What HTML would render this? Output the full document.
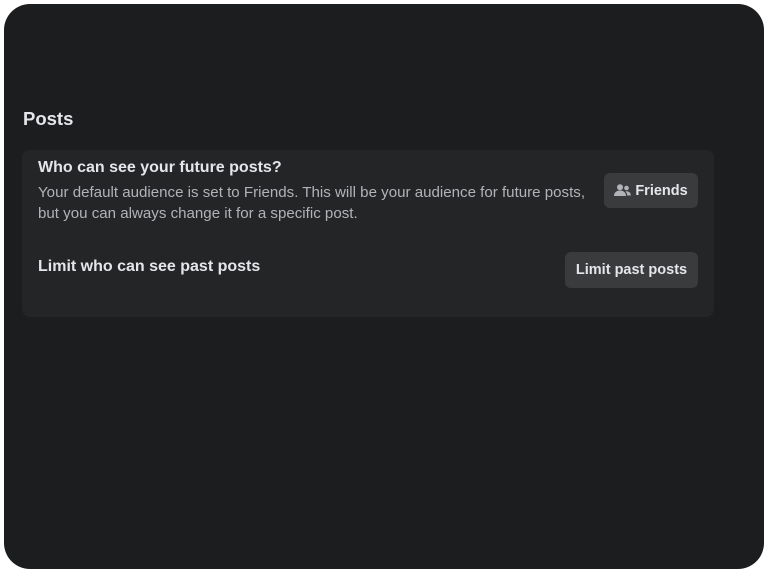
<!DOCTYPE html>
<html><head><meta charset="utf-8"><style>
html,body{margin:0;padding:0;background:#fff;width:768px;height:573px;overflow:hidden;font-family:"Liberation Sans",sans-serif;}
.frame{position:absolute;left:4px;top:4px;width:760px;height:565px;background:#1c1d1f;border-radius:26px;}
.h{position:absolute;left:23px;top:108px;color:#e4e6eb;font-size:18.5px;font-weight:bold;}
.card{position:absolute;left:22px;top:150px;width:692px;height:167px;background:#242527;border-radius:8px;}
.t{position:absolute;color:#e4e6eb;font-size:16px;font-weight:bold;}
.d{position:absolute;left:38px;top:182px;color:#b0b3b8;font-size:15.1px;line-height:21px;}
.btn{position:absolute;background:#3a3b3c;border-radius:6px;color:#e4e6eb;font-size:14.5px;font-weight:bold;display:flex;align-items:center;justify-content:center;}
</style></head><body>
<div class="frame"></div>
<div class="h">Posts</div>
<div class="card"></div>
<div class="t" style="left:38px;top:159px">Who can see your future posts?</div>
<div class="d">Your default audience is set to Friends. This will be your audience for future posts,<br>but you can always change it for a specific post.</div>
<div class="t" style="left:38px;top:258px">Limit who can see past posts</div>
<div class="btn" style="left:604px;top:173px;width:94px;height:35px;">
<svg width="17" height="13" viewBox="0 0 17 13" style="margin-right:4px"><circle cx="6" cy="3.2" r="3" fill="#b0b3b8"/><path d="M0 12c0-3.5 2.5-5.5 6-5.5s6 2 6 5.5z" fill="#b0b3b8"/><circle cx="12.5" cy="4" r="2.3" fill="#b0b3b8"/><path d="M12.5 7.3c2.5 0 4.3 1.5 4.3 4.2h-3.6c0-1.7-.6-3-1.8-3.9z" fill="#b0b3b8"/></svg>Friends</div>
<div class="btn" style="left:565px;top:252px;width:133px;height:36px;">Limit past posts</div>
</body></html>
